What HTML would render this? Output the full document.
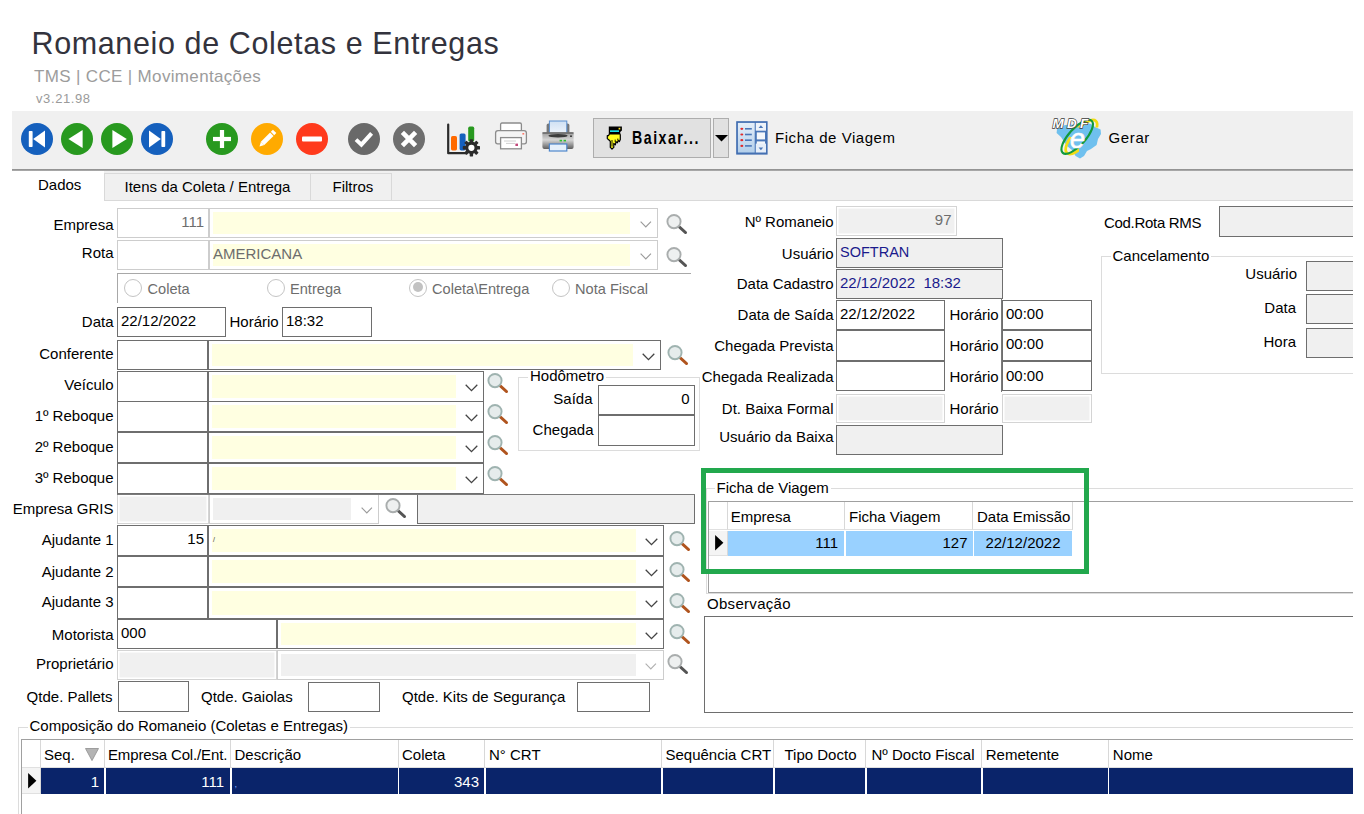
<!DOCTYPE html>
<html lang="pt-BR"><head><meta charset="utf-8"><title>Romaneio de Coletas e Entregas</title>
<style>
html,body{margin:0;padding:0;background:#fff}
body{width:1364px;height:814px;overflow:hidden;position:relative;font-family:"Liberation Sans",sans-serif;font-size:15px;color:#000}
#clip{position:absolute;left:0;top:0;width:1353px;height:814px;overflow:hidden}
#app{position:absolute;left:0;top:0;width:1364px;height:814px}
.title{position:absolute;left:31.5px;top:21px;font-size:30.5px;line-height:44px;color:#33333d;white-space:nowrap;letter-spacing:0.62px}
.sub{position:absolute;left:34px;top:65.2px;font-size:17px;line-height:24px;color:#9c9c9c;white-space:nowrap;letter-spacing:0.34px}
.ver{position:absolute;left:36px;top:90.5px;font-size:13px;line-height:16px;color:#9a9a9a;white-space:nowrap;letter-spacing:0.6px}
.toolbar{position:absolute;left:12px;top:111px;width:1341px;height:58px;background:#f0f0f0}
.tbline{position:absolute;left:12px;top:169px;width:1341px;height:2px;background:linear-gradient(#8a8a8a,#b0b0b0)}
.tabstrip{position:absolute;left:12px;top:171px;width:1341px;height:29.5px;background:#f0f0f0}
.tab{position:absolute;top:172.5px;height:28px;box-sizing:border-box;background:#f0f0f0;border:1px solid #d9d9d9;}
.tab.act{top:171px;height:31px;background:#fff;border:none}
.paneline{position:absolute;left:104px;top:200px;width:1249px;height:1px;background:#d9d9d9}
.t{position:absolute;white-space:nowrap;line-height:20px}
.bold{font-weight:bold}
.b{position:absolute;box-sizing:border-box}
.ic,.mag{position:absolute;overflow:visible}
.fd{background:#fff;border:1px solid #6e6e6e}
.fl{background:#fff;border:1px solid #cdcdcd}
.fg{background:#f0f0f0;border:1px solid #d4d4d4;box-shadow:inset 0 0 0 1.5px #fff}
.fgd{background:#f0f0f0;border:1px solid #6e6e6e}
.y,.g{position:absolute;left:3px;top:3px;bottom:3px;background:#ffffe1}
.g{background:#f0f0f0}
.hl{position:absolute;height:1px}
.vl{position:absolute;width:1px}
.rd{position:absolute;box-sizing:border-box;width:18px;height:18px;border-radius:50%;border:1.3px solid #c4c4c4;background:#fff}
.rd b{position:absolute;left:2.7px;top:2.7px;width:10px;height:10px;border-radius:50%;background:#c2c2c2}
.btn{background:#e1e1e1;border:1px solid #adadad}
.grp{border:1px solid #dcdcdc}
.lg{background:linear-gradient(to bottom,rgba(255,255,255,0) 6.5px,#fff 6.5px,#fff 11.5px,rgba(255,255,255,0) 11.5px);padding:0 2px}
.gridp{border:1px solid #a0a0a0;border-right:none;background:#fff}
.hc{background:#fff;border-right:1px solid #d8d8d8;border-bottom:1px solid #e0e0e0}
.indc{background:#f4f4f4;border-right:1px solid #d8d8d8;border-bottom:1px solid #e0e0e0}
.selb{background:#99d1ff}
.seln{background:#0a246a}
.green{border:5px solid #22a84d}
</style></head><body><div id="clip"><div id="app">
<div class="title">Romaneio de Coletas e Entregas</div>
<div class="sub">TMS | CCE | Movimentações</div>
<div class="ver">v3.21.98</div>
<div class="toolbar"></div><div class="tbline"></div>
<div class="tabstrip"></div>
<div class="tab act" style="left:12px;width:92px"></div>
<div class="tab" style="left:104px;width:207px"></div>
<div class="tab" style="left:310px;width:82px"></div>
<div class="paneline"></div>
<span class="t " style="left:38px;top:174.8px;">Dados</span>
<span class="t " style="left:124.5px;top:177.3px;">Itens da Coleta / Entrega</span>
<span class="t " style="left:332.5px;top:177.3px;">Filtros</span>
<svg class="ic" style="left:21.4px;top:123px" width="32" height="32" viewBox="0 0 32 32"><circle cx="16" cy="16" r="16" fill="#1560bd"/><rect x="7.8" y="8" width="3.8" height="16" rx="0.8" fill="#fff"/><polygon points="12.2,16 24,7.6 24,24.4" fill="#fff"/></svg>
<svg class="ic" style="left:61.2px;top:123px" width="32" height="32" viewBox="0 0 32 32"><circle cx="16" cy="16" r="16" fill="#28991f"/><polygon points="7.4,16 21.6,7 21.6,25" fill="#fff"/></svg>
<svg class="ic" style="left:100.8px;top:123px" width="32" height="32" viewBox="0 0 32 32"><circle cx="16" cy="16" r="16" fill="#28991f"/><polygon points="25.8,16 11.4,7 11.4,25" fill="#fff"/></svg>
<svg class="ic" style="left:140.6px;top:123px" width="32" height="32" viewBox="0 0 32 32"><circle cx="16" cy="16" r="16" fill="#1560bd"/><rect x="20.4" y="8" width="3.8" height="16" rx="0.8" fill="#fff"/><polygon points="19.8,16 8,7.6 8,24.4" fill="#fff"/></svg>
<svg class="ic" style="left:205.6px;top:123px" width="32" height="32" viewBox="0 0 32 32"><circle cx="16" cy="16" r="16" fill="#28991f"/><rect x="13.9" y="7" width="4.2" height="18" fill="#fff"/><rect x="7" y="13.9" width="18" height="4.2" fill="#fff"/></svg>
<svg class="ic" style="left:251px;top:123px" width="32" height="32" viewBox="0 0 32 32"><circle cx="16" cy="16" r="16" fill="#ffaa00"/><g transform="rotate(45 16 16)"><rect x="13.6" y="5.2" width="4.8" height="3" fill="#fff"/><rect x="13.6" y="9.2" width="4.8" height="13" fill="#fff"/><polygon points="13.6,22.2 18.4,22.2 16,26.6" fill="#fff"/></g></svg>
<svg class="ic" style="left:296.4px;top:123px" width="32" height="32" viewBox="0 0 32 32"><circle cx="16" cy="16" r="16" fill="#ff3a1c"/><rect x="6" y="13.4" width="20" height="5.2" rx="1" fill="#fff"/></svg>
<svg class="ic" style="left:347.6px;top:123px" width="32" height="32" viewBox="0 0 32 32"><circle cx="16" cy="16" r="16" fill="#696969"/><polyline points="8,16.6 13.4,21.6 23.6,10.4" fill="none" stroke="#fff" stroke-width="4"/></svg>
<svg class="ic" style="left:392.8px;top:123px" width="32" height="32" viewBox="0 0 32 32"><circle cx="16" cy="16" r="16" fill="#6e6e6e"/><path d="M9.4 9.4 L22.6 22.6 M22.6 9.4 L9.4 22.6" stroke="#fff" stroke-width="4.6"/></svg>
<svg class="ic" style="left:446px;top:123px" width="36" height="34" viewBox="0 0 36 34">
<path d="M2.2 1.5 V30.2 H20" fill="none" stroke="#2b2b2b" stroke-width="2.2" stroke-linecap="round" stroke-linejoin="round"/>
<rect x="5" y="13" width="6" height="14.4" rx="1.6" fill="#ff6a00"/>
<rect x="13.6" y="10.4" width="6" height="17" rx="1.6" fill="#1560bd"/>
<rect x="22.2" y="3.6" width="6" height="15" rx="1.6" fill="#28991f"/>
<g transform="translate(25.4 24.8)"><g fill="#2b2b2b"><circle r="6.2"/>
<rect x="-1.7" y="-8.6" width="3.4" height="17.2" rx="0.6"/>
<rect x="-1.7" y="-8.6" width="3.4" height="17.2" rx="0.6" transform="rotate(45)"/>
<rect x="-1.7" y="-8.6" width="3.4" height="17.2" rx="0.6" transform="rotate(90)"/>
<rect x="-1.7" y="-8.6" width="3.4" height="17.2" rx="0.6" transform="rotate(135)"/></g>
<circle r="3.1" fill="#fff"/></g></svg>
<svg class="ic" style="left:494px;top:121px" width="34" height="30" viewBox="0 0 34 30">
<path d="M6.6 9.6 V3.4 Q6.6 2 8 2 H26 Q27.4 2 27.4 3.4 V9.6" fill="#fff" stroke="#8c8c8c" stroke-width="1.3"/>
<path d="M6.6 22.8 H3.6 Q1.6 22.8 1.6 20.8 V12 Q1.6 9.6 4 9.6 H30 Q32.4 9.6 32.4 12 V20.8 Q32.4 22.8 30.4 22.8 H27.4" fill="#f4f4f4" stroke="#8c8c8c" stroke-width="1.3"/>
<rect x="6.6" y="16.6" width="20.8" height="11.2" fill="#fff" stroke="#8c8c8c" stroke-width="1.3"/>
<path d="M10 20 H22 M12 22.4 H21" stroke="#d0d0d0" stroke-width="1"/>
<rect x="21.4" y="22.6" width="2.6" height="2.4" fill="#c2477a"/><rect x="28.4" y="12" width="1.8" height="1.6" fill="#ff7a6a"/></svg>
<svg class="ic" style="left:541px;top:120px" width="34" height="32" viewBox="0 0 34 32">
<defs><linearGradient id="pg" x1="0" y1="0" x2="0" y2="1"><stop offset="0" stop-color="#9a9a9a"/><stop offset="0.45" stop-color="#d6d6d6"/><stop offset="1" stop-color="#5e5e5e"/></linearGradient>
<linearGradient id="pb" x1="0" y1="0" x2="0" y2="1"><stop offset="0" stop-color="#cfe0f3"/><stop offset="1" stop-color="#eef4fb"/></linearGradient></defs>
<path d="M5.6 13 V5 Q5.6 3.4 7.4 3.4 H26.6 Q28.4 3.4 28.4 5 V13 Z" fill="#777"/>
<rect x="8.4" y="1" width="17.4" height="12.6" fill="url(#pb)" stroke="#5b8fd0" stroke-width="1"/>
<path d="M1.4 14.2 Q1.4 12.4 3.2 12.4 H30.8 Q32.6 12.4 32.6 14.2 V27 Q32.6 29 30.6 29 H3.4 Q1.4 29 1.4 27 Z" fill="url(#pg)"/>
<rect x="1.4" y="12.2" width="31.2" height="1.6" fill="#6a6a6a"/>
<ellipse cx="17" cy="15.8" rx="9.6" ry="1.7" fill="#3c3c3c"/>
<rect x="18.6" y="19.8" width="2.4" height="1.6" fill="#2fc02f"/><rect x="22.6" y="19.8" width="2.4" height="1.6" fill="#2fc02f"/>
<rect x="29" y="15.4" width="2" height="1.6" fill="#444"/>
<rect x="8.4" y="24" width="17.4" height="7" fill="#e6f0fb" stroke="#4f87cc" stroke-width="1.2"/></svg>
<div class="b btn" style="left:593px;top:118px;width:118px;height:39.5px;"></div>
<div class="b btn" style="left:712.5px;top:118px;width:16.5px;height:39.5px;"></div>
<svg class="ic" style="left:714.6px;top:135px" width="13" height="7" viewBox="0 0 13 7"><polygon points="0,0 13,0 6.5,6.6" fill="#000"/></svg>
<svg class="ic" style="left:606px;top:126px" width="17" height="24" viewBox="0 0 17 24">
<path d="M2.8 0.4 H15.9 V4.6 L14.2 6 V7.9 H2.8 Z" fill="#000"/>
<rect x="4" y="4.3" width="9" height="1.7" fill="#19e0e6"/><rect x="12.6" y="1.8" width="1.7" height="1.7" fill="#ffe61e"/>
<path d="M3.6 7.9 H13.6 Q14.3 7.9 14.3 9 V13.4 L13.4 15.6 L12.2 14.4 L11.4 16.8 L10 15.6 L9.4 18.8 L7.8 17.4 V21.4 L6 23 L4.3 21.4 V15.4 L3 14 L1.3 12.6 V9.6 L2.4 9.6 Z" fill="#ffff1e" stroke="#000" stroke-width="1.2" stroke-linejoin="round"/>
<path d="M6 14 V20.6 M9.2 13.6 V16 M11.8 12.6 V14" stroke="#000" stroke-width="0.9"/></svg>
<span class="t bold" style="left:632.2px;top:126.67px;font-size:17.7px;line-height:23px;letter-spacing:1.9px;transform:scaleX(0.8);transform-origin:0 50%;">Baixar...</span>
<svg class="ic" style="left:736px;top:121px" width="32" height="34" viewBox="0 0 32 34">
<defs><linearGradient id="lg1" x1="0" y1="0" x2="0" y2="1"><stop offset="0" stop-color="#e4eef9"/><stop offset="1" stop-color="#b3cfea"/></linearGradient></defs>
<rect x="0.9" y="0.9" width="30" height="32" fill="#4a77b8" stroke="#3f6cb0" stroke-width="1.4"/>
<rect x="1.9" y="1.9" width="16.8" height="29.6" fill="url(#lg1)"/>
<rect x="19.8" y="1.9" width="10.2" height="7.8" fill="#eef3fa"/>
<rect x="20.8" y="11.4" width="8.2" height="7" fill="#f4f7fb"/>
<rect x="20.8" y="20.4" width="8.2" height="3.4" fill="#f4f7fb"/>
<rect x="19.8" y="22.6" width="10.2" height="8.9" fill="#e6eef8"/>
<g fill="#e02a2a"><ellipse cx="5.8" cy="7.8" rx="1.5" ry="1.1"/><ellipse cx="5.8" cy="13.5" rx="1.5" ry="1.1"/><ellipse cx="5.8" cy="19.2" rx="1.5" ry="1.1"/><ellipse cx="5.8" cy="24.9" rx="1.5" ry="1.1"/></g>
<g fill="#4a77b8"><rect x="9" y="7" width="6.8" height="1.6"/><rect x="9" y="12.7" width="6.8" height="1.6"/><rect x="9" y="18.4" width="6.8" height="1.6"/><rect x="9" y="24.1" width="6.8" height="1.6"/></g>
<polygon points="22.6,7 27.2,7 24.9,4.2" fill="#4a77b8"/><polygon points="22.6,26.4 27.2,26.4 24.9,29.2" fill="#4a77b8"/></svg>
<span class="t " style="left:775px;top:128.2px;letter-spacing:0.55px;">Ficha de Viagem</span>
<svg class="ic" style="left:1051px;top:116px" width="52" height="44" viewBox="0 0 52 44">
<path d="M6 13 L14 9 L24 8.4 L33 6.6 L40 8 L44 11 L49.6 13.4 L50 18 L47 23 L45.6 29 L40 33 L36 35 L33 40 L29 42.6 L24.6 40 L21 34 L16 30 L12.6 25 L10 21 L5.6 17 Z" fill="#6fc0ee"/>
<clipPath id="yc"><rect x="0" y="0" width="52" height="11.5"/><rect x="0" y="21" width="28" height="23"/></clipPath><g clip-path="url(#yc)"><ellipse cx="30.4" cy="21" rx="8.4" ry="21.6" transform="rotate(42 30.4 21)" fill="none" stroke="#f2dc14" stroke-width="2.8"/></g>
<ellipse cx="26.2" cy="20.8" rx="8.4" ry="21.6" transform="rotate(42 26.2 20.8)" fill="none" stroke="#129a3c" stroke-width="2.1"/>
<text x="19.6" y="32.2" font-family="Liberation Sans, sans-serif" font-size="27" font-style="italic" fill="#8a8a8a">e</text>
<text x="19" y="31.6" font-family="Liberation Sans, sans-serif" font-size="27" font-style="italic" fill="#fff" stroke="#fff" stroke-width="0.7">e</text>
<text x="1.4" y="11.8" font-family="Liberation Sans, sans-serif" font-size="13.5" font-weight="bold" font-style="italic" fill="#fff" stroke="#3a3a3a" stroke-width="1.3" paint-order="stroke" letter-spacing="3.3">MDF</text>
</svg>
<span class="t " style="left:1108.6px;top:128.2px;letter-spacing:0.6px;">Gerar</span>
<span class="t " style="right:1250.5px;top:214.8px;">Empresa</span>
<div class="b fl" style="left:117px;top:208px;width:91.5px;height:30px;"></div>
<div class="b fl" style="left:208.5px;top:208px;width:449.5px;height:30px;"><i class="y" style="right:27px"></i></div>
<svg class="mag" style="left:640.2px;top:221.4px" width="11.6" height="7.14" viewBox="0 0 13 8"><polyline points="0.7,0.8 6.5,6.6 12.3,0.8" fill="none" stroke="#9a9a9a" stroke-width="1.3"/></svg>
<svg class="mag" style="left:665px;top:212.5px" width="24" height="24" viewBox="0 0 24 24"><line x1="14" y1="13.6" x2="20.6" y2="19.6" stroke="#555" stroke-width="2.8" stroke-linecap="round"/><circle cx="9" cy="8.6" r="6.6" fill="#eef0f0" stroke="#a9adad" stroke-width="1.9"/></svg>
<span class="t " style="right:1160px;top:211.8px;color:#6d6d6d;">111</span>
<span class="t " style="right:1250.5px;top:242.8px;">Rota</span>
<div class="b fl" style="left:117px;top:240px;width:91.5px;height:30px;"></div>
<div class="b fl" style="left:208.5px;top:240px;width:449.5px;height:30px;"><i class="y" style="right:27px"></i></div>
<svg class="mag" style="left:640.2px;top:253.4px" width="11.6" height="7.14" viewBox="0 0 13 8"><polyline points="0.7,0.8 6.5,6.6 12.3,0.8" fill="none" stroke="#9a9a9a" stroke-width="1.3"/></svg>
<svg class="mag" style="left:665px;top:245.6px" width="24" height="24" viewBox="0 0 24 24"><line x1="14" y1="13.6" x2="20.6" y2="19.6" stroke="#555" stroke-width="2.8" stroke-linecap="round"/><circle cx="9" cy="8.6" r="6.6" fill="#eef0f0" stroke="#a9adad" stroke-width="1.9"/></svg>
<span class="t " style="left:213px;top:244.3px;color:#6d6d6d;">AMERICANA</span>
<div class="hl" style="left:117px;top:272.5px;width:574px;background:#a8a8a8"></div>
<div class="vl" style="left:117px;top:272.5px;height:30px;background:#a8a8a8"></div>
<i class="rd" style="left:124px;top:278.5px"></i>
<span class="t " style="left:147.5px;top:278.69px;font-size:14.6px;line-height:20px;color:#6d6d6d;">Coleta</span>
<i class="rd" style="left:267px;top:278.5px"></i>
<span class="t " style="left:290px;top:278.69px;font-size:14.6px;line-height:20px;color:#6d6d6d;">Entrega</span>
<i class="rd" style="left:409px;top:278.5px"><b></b></i>
<span class="t " style="left:432px;top:278.69px;font-size:14.6px;line-height:20px;color:#6d6d6d;">Coleta\Entrega</span>
<i class="rd" style="left:552px;top:278.5px"></i>
<span class="t " style="left:575px;top:278.69px;font-size:14.6px;line-height:20px;color:#6d6d6d;">Nota Fiscal</span>
<span class="t " style="right:1250.5px;top:312.3px;">Data</span>
<div class="b fd" style="left:117px;top:307px;width:109px;height:30px;"></div>
<span class="t " style="left:121px;top:311.05px;">22/12/2022</span>
<span class="t " style="left:229.5px;top:312.3px;">Horário</span>
<div class="b fd" style="left:281.5px;top:307px;width:90.5px;height:30px;"></div>
<span class="t " style="left:286px;top:310.55px;">18:32</span>
<span class="t " style="right:1250.5px;top:343.55px;">Conferente</span>
<div class="b fd" style="left:117px;top:340px;width:91px;height:30px;"></div>
<div class="b fd" style="left:208px;top:340px;width:452.5px;height:30px;"><i class="y" style="right:27px"></i></div>
<svg class="mag" style="left:641.5px;top:353px" width="13" height="8.0" viewBox="0 0 13 8"><polyline points="0.7,0.8 6.5,6.6 12.3,0.8" fill="none" stroke="#444" stroke-width="1.3"/></svg>
<svg class="mag" style="left:666px;top:344px" width="24" height="24" viewBox="0 0 24 24"><line x1="14" y1="13.6" x2="20.6" y2="19.6" stroke="#b0541e" stroke-width="2.8" stroke-linecap="round"/><circle cx="9" cy="8.6" r="6.6" fill="#e6ecec" stroke="#9fb3b0" stroke-width="1.9"/></svg>
<span class="t " style="right:1250.5px;top:374.8px;">Veículo</span>
<div class="b fd" style="left:117px;top:371px;width:91px;height:31px;"></div>
<div class="b fd" style="left:208px;top:371px;width:275.5px;height:31px;"><i class="y" style="right:27px"></i></div>
<svg class="mag" style="left:464.5px;top:384px" width="13" height="8.0" viewBox="0 0 13 8"><polyline points="0.7,0.8 6.5,6.6 12.3,0.8" fill="none" stroke="#444" stroke-width="1.3"/></svg>
<svg class="mag" style="left:486px;top:371.9px" width="24" height="24" viewBox="0 0 24 24"><line x1="14" y1="13.6" x2="20.6" y2="19.6" stroke="#b0541e" stroke-width="2.8" stroke-linecap="round"/><circle cx="9" cy="8.6" r="6.6" fill="#e6ecec" stroke="#9fb3b0" stroke-width="1.9"/></svg>
<span class="t " style="right:1250.5px;top:406.05px;">1º Reboque</span>
<div class="b fd" style="left:117px;top:401px;width:91px;height:31px;"></div>
<div class="b fd" style="left:208px;top:401px;width:275.5px;height:31px;"><i class="y" style="right:27px"></i></div>
<svg class="mag" style="left:464.5px;top:414px" width="13" height="8.0" viewBox="0 0 13 8"><polyline points="0.7,0.8 6.5,6.6 12.3,0.8" fill="none" stroke="#444" stroke-width="1.3"/></svg>
<svg class="mag" style="left:486px;top:402.8px" width="24" height="24" viewBox="0 0 24 24"><line x1="14" y1="13.6" x2="20.6" y2="19.6" stroke="#b0541e" stroke-width="2.8" stroke-linecap="round"/><circle cx="9" cy="8.6" r="6.6" fill="#e6ecec" stroke="#9fb3b0" stroke-width="1.9"/></svg>
<span class="t " style="right:1250.5px;top:437.3px;">2º Reboque</span>
<div class="b fd" style="left:117px;top:432px;width:91px;height:31px;"></div>
<div class="b fd" style="left:208px;top:432px;width:275.5px;height:31px;"><i class="y" style="right:27px"></i></div>
<svg class="mag" style="left:464.5px;top:445px" width="13" height="8.0" viewBox="0 0 13 8"><polyline points="0.7,0.8 6.5,6.6 12.3,0.8" fill="none" stroke="#444" stroke-width="1.3"/></svg>
<svg class="mag" style="left:486px;top:434px" width="24" height="24" viewBox="0 0 24 24"><line x1="14" y1="13.6" x2="20.6" y2="19.6" stroke="#b0541e" stroke-width="2.8" stroke-linecap="round"/><circle cx="9" cy="8.6" r="6.6" fill="#e6ecec" stroke="#9fb3b0" stroke-width="1.9"/></svg>
<span class="t " style="right:1250.5px;top:468.05px;">3º Reboque</span>
<div class="b fd" style="left:117px;top:463px;width:91px;height:30.5px;"></div>
<div class="b fd" style="left:208px;top:463px;width:275.5px;height:30.5px;"><i class="y" style="right:27px"></i></div>
<svg class="mag" style="left:464.5px;top:476px" width="13" height="8.0" viewBox="0 0 13 8"><polyline points="0.7,0.8 6.5,6.6 12.3,0.8" fill="none" stroke="#444" stroke-width="1.3"/></svg>
<svg class="mag" style="left:486px;top:465.2px" width="24" height="24" viewBox="0 0 24 24"><line x1="14" y1="13.6" x2="20.6" y2="19.6" stroke="#b0541e" stroke-width="2.8" stroke-linecap="round"/><circle cx="9" cy="8.6" r="6.6" fill="#e6ecec" stroke="#9fb3b0" stroke-width="1.9"/></svg>
<span class="t " style="right:1250.5px;top:499.3px;">Empresa GRIS</span>
<div class="b fg" style="left:117px;top:494px;width:92px;height:30px;"></div>
<div class="b fl" style="left:209px;top:494px;width:170px;height:30px;"><i class="g" style="right:27px"></i></div>
<svg class="mag" style="left:361.2px;top:507.4px" width="11.6" height="7.14" viewBox="0 0 13 8"><polyline points="0.7,0.8 6.5,6.6 12.3,0.8" fill="none" stroke="#9a9a9a" stroke-width="1.3"/></svg>
<svg class="mag" style="left:384px;top:497px" width="24" height="24" viewBox="0 0 24 24"><line x1="14" y1="13.6" x2="20.6" y2="19.6" stroke="#555" stroke-width="2.8" stroke-linecap="round"/><circle cx="9" cy="8.6" r="6.6" fill="#eef0f0" stroke="#a9adad" stroke-width="1.9"/></svg>
<div class="b fgd" style="left:416.5px;top:494px;width:278.5px;height:30px;"></div>
<div class="hl" style="left:117px;top:493.5px;width:578px;background:#7a7a7a"></div>
<span class="t " style="right:1250.5px;top:530.3px;">Ajudante 1</span>
<div class="b fd" style="left:117px;top:525px;width:91px;height:31px;"></div>
<div class="b fd" style="left:208px;top:525px;width:455.5px;height:31px;"><i class="y" style="right:27px"></i></div>
<svg class="mag" style="left:644.5px;top:538px" width="13" height="8.0" viewBox="0 0 13 8"><polyline points="0.7,0.8 6.5,6.6 12.3,0.8" fill="none" stroke="#444" stroke-width="1.3"/></svg>
<svg class="mag" style="left:667.6px;top:530.2px" width="24" height="24" viewBox="0 0 24 24"><line x1="14" y1="13.6" x2="20.6" y2="19.6" stroke="#b0541e" stroke-width="2.8" stroke-linecap="round"/><circle cx="9" cy="8.6" r="6.6" fill="#e6ecec" stroke="#9fb3b0" stroke-width="1.9"/></svg>
<span class="t " style="right:1160px;top:529.05px;">15</span>
<span class="t " style="left:213px;top:527.3px;color:#333;"><span style="font-size:7px">/</span></span>
<span class="t " style="right:1250.5px;top:561.55px;">Ajudante 2</span>
<div class="b fd" style="left:117px;top:556px;width:91px;height:31px;"></div>
<div class="b fd" style="left:208px;top:556px;width:455.5px;height:31px;"><i class="y" style="right:27px"></i></div>
<svg class="mag" style="left:644.5px;top:569px" width="13" height="8.0" viewBox="0 0 13 8"><polyline points="0.7,0.8 6.5,6.6 12.3,0.8" fill="none" stroke="#444" stroke-width="1.3"/></svg>
<svg class="mag" style="left:667.6px;top:560.6px" width="24" height="24" viewBox="0 0 24 24"><line x1="14" y1="13.6" x2="20.6" y2="19.6" stroke="#b0541e" stroke-width="2.8" stroke-linecap="round"/><circle cx="9" cy="8.6" r="6.6" fill="#e6ecec" stroke="#9fb3b0" stroke-width="1.9"/></svg>
<span class="t " style="right:1250.5px;top:592.3px;">Ajudante 3</span>
<div class="b fd" style="left:117px;top:587px;width:91px;height:31.5px;"></div>
<div class="b fd" style="left:208px;top:587px;width:455.5px;height:31.5px;"><i class="y" style="right:27px"></i></div>
<svg class="mag" style="left:644.5px;top:600px" width="13" height="8.0" viewBox="0 0 13 8"><polyline points="0.7,0.8 6.5,6.6 12.3,0.8" fill="none" stroke="#444" stroke-width="1.3"/></svg>
<svg class="mag" style="left:667.6px;top:591.6px" width="24" height="24" viewBox="0 0 24 24"><line x1="14" y1="13.6" x2="20.6" y2="19.6" stroke="#b0541e" stroke-width="2.8" stroke-linecap="round"/><circle cx="9" cy="8.6" r="6.6" fill="#e6ecec" stroke="#9fb3b0" stroke-width="1.9"/></svg>
<span class="t " style="right:1250.5px;top:624.8px;">Motorista</span>
<div class="b fd" style="left:117px;top:619px;width:159.5px;height:30px;"></div>
<div class="b fd" style="left:276.5px;top:619px;width:387.0px;height:30px;"><i class="y" style="right:27px"></i></div>
<svg class="mag" style="left:644.5px;top:632px" width="13" height="8.0" viewBox="0 0 13 8"><polyline points="0.7,0.8 6.5,6.6 12.3,0.8" fill="none" stroke="#444" stroke-width="1.3"/></svg>
<svg class="mag" style="left:667.6px;top:622.8px" width="24" height="24" viewBox="0 0 24 24"><line x1="14" y1="13.6" x2="20.6" y2="19.6" stroke="#b0541e" stroke-width="2.8" stroke-linecap="round"/><circle cx="9" cy="8.6" r="6.6" fill="#e6ecec" stroke="#9fb3b0" stroke-width="1.9"/></svg>
<span class="t " style="left:121px;top:622.8px;">000</span>
<span class="t " style="right:1250.5px;top:654.3px;">Proprietário</span>
<div class="b fg" style="left:117px;top:650px;width:159.5px;height:29.5px;"></div>
<div class="b fl" style="left:277px;top:650px;width:386.5px;height:29.5px;"><i class="g" style="right:27px"></i></div>
<svg class="mag" style="left:644.7px;top:663.4px" width="11.6" height="7.14" viewBox="0 0 13 8"><polyline points="0.7,0.8 6.5,6.6 12.3,0.8" fill="none" stroke="#b0b0b0" stroke-width="1.3"/></svg>
<svg class="mag" style="left:666px;top:653px" width="24" height="24" viewBox="0 0 24 24"><line x1="14" y1="13.6" x2="20.6" y2="19.6" stroke="#555" stroke-width="2.8" stroke-linecap="round"/><circle cx="9" cy="8.6" r="6.6" fill="#eef0f0" stroke="#a9adad" stroke-width="1.9"/></svg>
<span class="t " style="right:1251.5px;top:686.8px;">Qtde. Pallets</span>
<div class="b fd" style="left:117.5px;top:681px;width:71.5px;height:30.5px;"></div>
<span class="t " style="left:201px;top:686.8px;">Qtde. Gaiolas</span>
<div class="b fd" style="left:307.5px;top:682px;width:72.5px;height:30px;"></div>
<span class="t " style="left:402px;top:686.8px;">Qtde. Kits de Segurança</span>
<div class="b fd" style="left:576.5px;top:682px;width:73.5px;height:30px;"></div>
<div class="b grp" style="left:518px;top:376.5px;width:181.5px;height:74px;"></div>
<span class="t " style="left:528px;top:366.05px;"><span class="lg">Hodômetro</span></span>
<span class="t " style="right:771.5px;top:388.8px;">Saída</span>
<div class="b fd" style="left:597.5px;top:385px;width:97px;height:30px;"></div>
<span class="t " style="right:674.5px;top:388.8px;">0</span>
<span class="t " style="right:770.5px;top:419.8px;">Chegada</span>
<div class="b fd" style="left:597.5px;top:415px;width:97px;height:31px;"></div>
<span class="t " style="right:530.5px;top:211.55px;">Nº Romaneio</span>
<div class="b fg" style="left:836px;top:206px;width:121px;height:30px;"></div>
<span class="t " style="right:412.5px;top:210.3px;color:#6d6d6d;">97</span>
<span class="t " style="right:530.5px;top:244.3px;">Usuário</span>
<div class="b fgd" style="left:836px;top:237.5px;width:166.5px;height:30px;"></div>
<span class="t " style="left:840px;top:241.98px;font-size:14.5px;line-height:20px;color:#1a1a8c;">SOFTRAN</span>
<span class="t " style="right:530.5px;top:274.3px;">Data Cadastro</span>
<div class="b fgd" style="left:836px;top:269px;width:166.5px;height:29.5px;"></div>
<span class="t " style="left:840px;top:272.8px;color:#1a1a8c;">22/12/2022&nbsp; 18:32</span>
<span class="t " style="right:530.5px;top:305.3px;">Data de Saída</span>
<div class="b fd" style="left:836px;top:300px;width:108.5px;height:30px;"></div>
<span class="t " style="left:840px;top:303.55px;">22/12/2022</span>
<span class="t " style="left:949.5px;top:305.3px;">Horário</span>
<div class="b fd" style="left:1002px;top:300px;width:90px;height:30px;"></div>
<span class="t " style="left:1006px;top:303.55px;">00:00</span>
<span class="t " style="right:530.5px;top:336.05px;">Chegada Prevista</span>
<div class="b fd" style="left:836px;top:330px;width:108.5px;height:31px;"></div>
<span class="t " style="left:949.5px;top:336.05px;">Horário</span>
<div class="b fd" style="left:1002px;top:330px;width:90px;height:31px;"></div>
<span class="t " style="left:1006px;top:334.3px;">00:00</span>
<span class="t " style="right:530.5px;top:367.3px;">Chegada Realizada</span>
<div class="b fd" style="left:836px;top:361px;width:108.5px;height:30px;"></div>
<span class="t " style="left:949.5px;top:367.3px;">Horário</span>
<div class="b fd" style="left:1002px;top:361px;width:90px;height:30px;"></div>
<span class="t " style="left:1006px;top:365.55px;">00:00</span>
<span class="t " style="right:530.5px;top:399.05px;">Dt. Baixa Formal</span>
<div class="b fg" style="left:836px;top:393.5px;width:108.5px;height:29.5px;"></div>
<span class="t " style="left:949.5px;top:399.05px;">Horário</span>
<div class="b fg" style="left:1002px;top:393.5px;width:90px;height:29.5px;"></div>
<div class="vl" style="left:1001px;top:298px;height:94px;background:#7a7a7a"></div>
<span class="t " style="right:530.5px;top:427.3px;">Usuário da Baixa</span>
<div class="b fgd" style="left:836px;top:425px;width:166.5px;height:29.5px;"></div>
<span class="t " style="left:1104px;top:213.05px;letter-spacing:-0.3px;">Cod.Rota RMS</span>
<div class="b fgd" style="left:1218.5px;top:206px;width:160px;height:30.5px;"></div>
<div class="b grp" style="left:1101px;top:255.5px;width:270px;height:118px;"></div>
<span class="t " style="left:1110.5px;top:245.55px;"><span class="lg">Cancelamento</span></span>
<span class="t " style="right:67px;top:264.3px;">Usuário</span>
<div class="b fgd" style="left:1306px;top:260.5px;width:80px;height:30px;"></div>
<span class="t " style="right:68px;top:298.05px;">Data</span>
<div class="b fgd" style="left:1306px;top:293.5px;width:80px;height:30.5px;"></div>
<span class="t " style="right:68px;top:331.8px;">Hora</span>
<div class="b fgd" style="left:1306px;top:327.5px;width:80px;height:30.5px;"></div>
<div class="b grp" style="left:705.5px;top:488px;width:680px;height:106px;"></div>
<span class="t " style="left:714.5px;top:477.8px;"><span class="lg">Ficha de Viagem</span></span>
<div class="b gridp" style="left:708px;top:501px;width:680px;height:92px;"></div>
<div class="b hc" style="left:709px;top:502px;width:18.5px;height:28px;"></div>
<div class="b hc" style="left:727.5px;top:502px;width:117px;height:28px;"></div>
<span class="t " style="left:730.75px;top:506.6px;">Empresa</span>
<div class="b hc" style="left:844.5px;top:502px;width:128.5px;height:28px;"></div>
<span class="t " style="left:849px;top:506.6px;">Ficha Viagem</span>
<div class="b hc" style="left:973px;top:502px;width:99.5px;height:28px;"></div>
<span class="t " style="left:977px;top:506.6px;">Data Emissão</span>
<div class="b indc" style="left:709px;top:530.5px;width:18.5px;height:25px;"></div>
<svg class="ic" style="left:714.6px;top:535px" width="8.5" height="15.6" viewBox="0 0 9 17"><polygon points="0,0 9,8.5 0,17" fill="#000"/></svg>
<div class="b selb" style="left:728px;top:530.5px;width:116px;height:25px;"></div>
<span class="t " style="right:526px;top:532.8px;">111</span>
<div class="b selb" style="left:845.5px;top:530.5px;width:127px;height:25px;"></div>
<span class="t " style="right:396.5px;top:532.8px;">127</span>
<div class="b selb" style="left:974px;top:530.5px;width:98px;height:25px;"></div>
<span class="t " style="right:303.5px;top:532.8px;">22/12/2022</span>
<div class="b green" style="left:701px;top:468px;width:388px;height:106px;"></div>
<span class="t " style="left:707px;top:594.3px;letter-spacing:0.3px;">Observação</span>
<div class="b fd" style="left:704px;top:616px;width:680px;height:96.5px;"></div>
<div class="b grp" style="left:18px;top:726.5px;width:1380px;height:120px;"></div>
<span class="t " style="left:27.5px;top:716.05px;"><span class="lg">Composição do Romaneio (Coletas e Entregas)</span></span>
<div class="b gridp" style="left:21px;top:739px;width:1380px;height:100px;"></div>
<div class="b hc" style="left:22px;top:740px;width:18.5px;height:28px;"></div>
<div class="b hc" style="left:40.5px;top:740px;width:64.5px;height:28px;"></div>
<span class="t " style="left:44px;top:744.6px;">Seq.</span>
<div class="b hc" style="left:105px;top:740px;width:126px;height:28px;"></div>
<span class="t " style="left:108px;top:744.6px;"><span style="letter-spacing:-0.15px">Empresa Col./Ent.</span></span>
<div class="b hc" style="left:231px;top:740px;width:167.5px;height:28px;"></div>
<span class="t " style="left:234.5px;top:744.6px;">Descrição</span>
<div class="b hc" style="left:398.5px;top:740px;width:86.5px;height:28px;"></div>
<span class="t " style="left:402px;top:744.6px;">Coleta</span>
<div class="b hc" style="left:485px;top:740px;width:177px;height:28px;"></div>
<span class="t " style="left:489px;top:744.6px;">N° CRT</span>
<div class="b hc" style="left:662px;top:740px;width:112px;height:28px;"></div>
<span class="t " style="left:665.5px;top:744.6px;">Sequência CRT</span>
<div class="b hc" style="left:774px;top:740px;width:92px;height:28px;"></div>
<span class="t " style="left:784.5px;top:744.6px;">Tipo Docto</span>
<div class="b hc" style="left:866px;top:740px;width:116px;height:28px;"></div>
<span class="t " style="left:871.5px;top:744.6px;">Nº Docto Fiscal</span>
<div class="b hc" style="left:982px;top:740px;width:126.5px;height:28px;"></div>
<span class="t " style="left:985.75px;top:744.6px;">Remetente</span>
<div class="b hc" style="left:1108.5px;top:740px;width:280px;height:28px;"></div>
<span class="t " style="left:1112.8px;top:744.6px;">Nome</span>
<svg class="ic" style="left:85px;top:748px" width="14" height="13" viewBox="0 0 14 13"><polygon points="0.5,0.5 13.5,0.5 7,12.6" fill="#b4b4b4" stroke="#8e8e8e" stroke-width="0.8"/></svg>
<div class="b indc" style="left:22px;top:768px;width:18.5px;height:25.5px;"></div>
<svg class="ic" style="left:27.6px;top:773px" width="8.5" height="15.6" viewBox="0 0 9 17"><polygon points="0,0 9,8.5 0,17" fill="#000"/></svg>
<div class="b seln" style="left:41.0px;top:768px;width:63.0px;height:25.5px;"></div>
<div class="b seln" style="left:105.5px;top:768px;width:124.5px;height:25.5px;"></div>
<div class="b seln" style="left:231.5px;top:768px;width:166.0px;height:25.5px;"></div>
<div class="b seln" style="left:399.0px;top:768px;width:85.0px;height:25.5px;"></div>
<div class="b seln" style="left:485.5px;top:768px;width:175.5px;height:25.5px;"></div>
<div class="b seln" style="left:662.5px;top:768px;width:110.5px;height:25.5px;"></div>
<div class="b seln" style="left:774.5px;top:768px;width:90.5px;height:25.5px;"></div>
<div class="b seln" style="left:866.5px;top:768px;width:114.5px;height:25.5px;"></div>
<div class="b seln" style="left:982.5px;top:768px;width:125.0px;height:25.5px;"></div>
<div class="b seln" style="left:1109.0px;top:768px;width:278.5px;height:25.5px;"></div>
<span class="t " style="right:1265px;top:771.8px;color:#fff;">1</span>
<span class="t " style="right:1140px;top:771.8px;color:#fff;">111</span>
<span class="t " style="right:885px;top:771.8px;color:#fff;">343</span>
<span class="t " style="left:234.5px;top:771.8px;color:#8ab4ff;"><span style="font-size:9px">,</span></span>
</div></div></body></html>
